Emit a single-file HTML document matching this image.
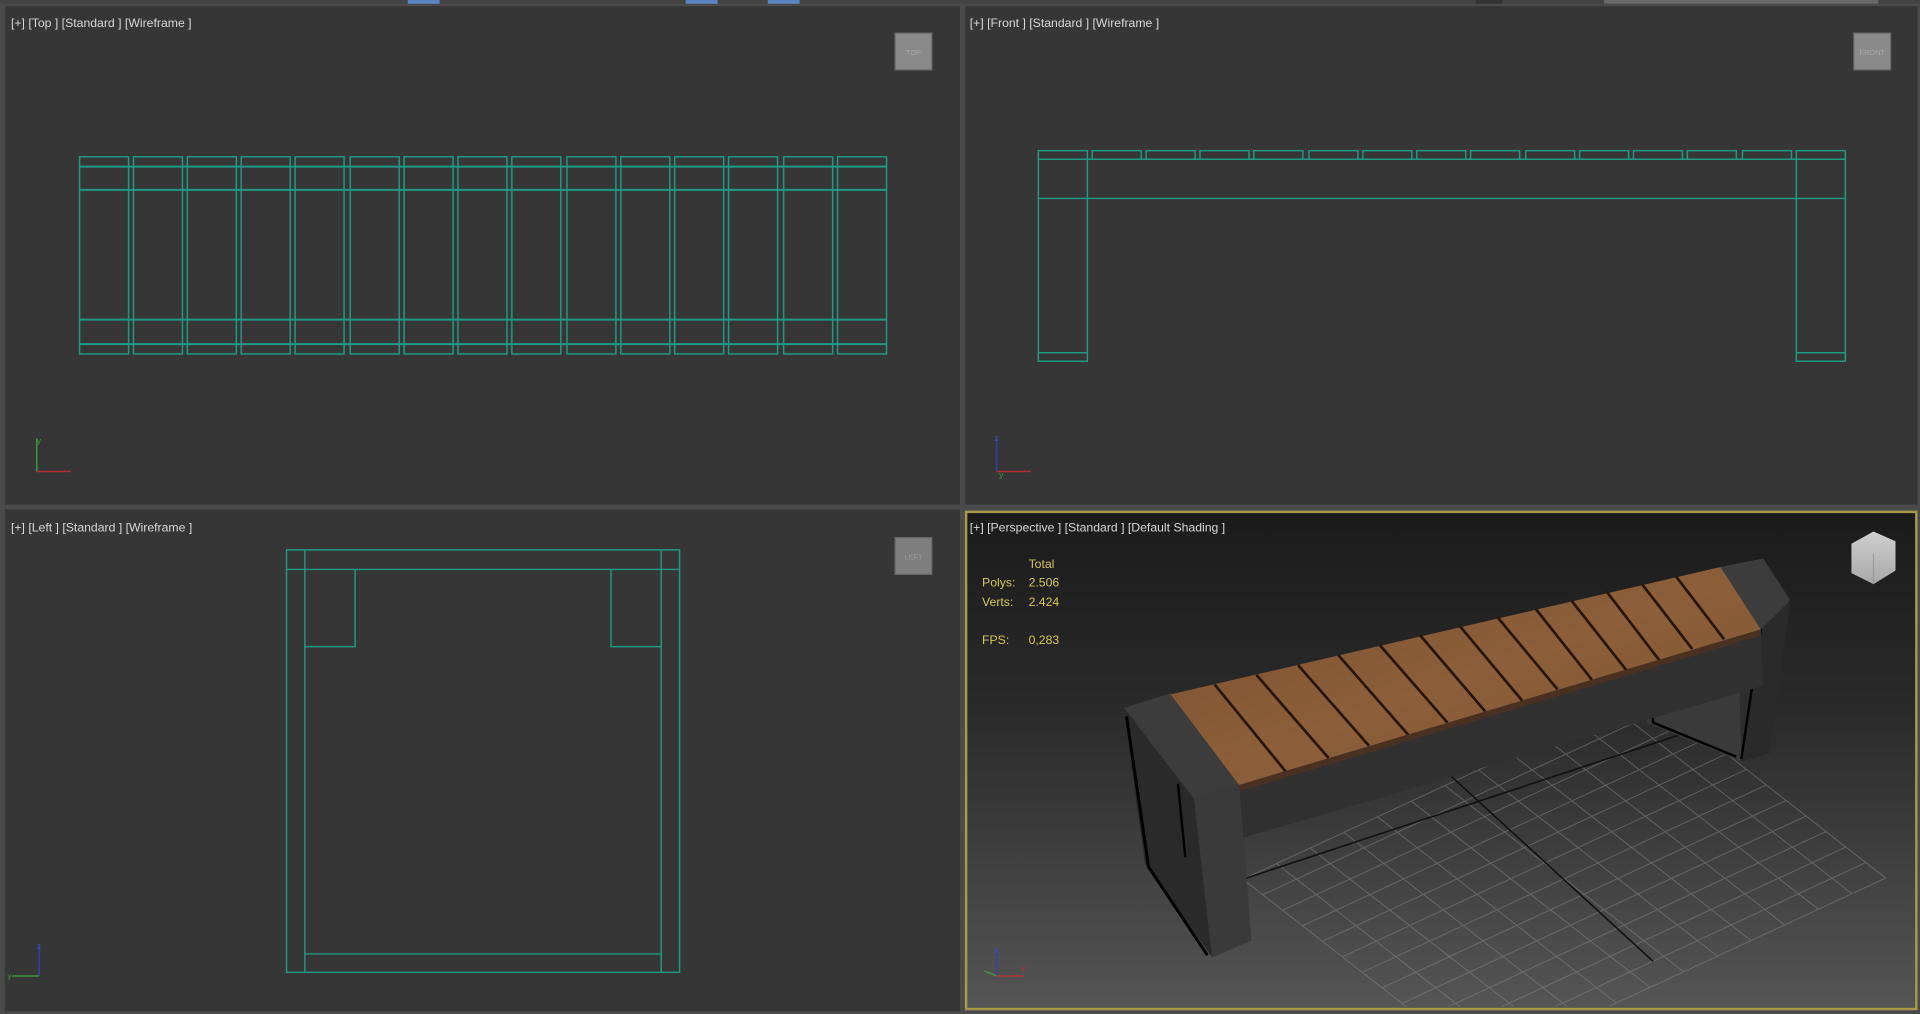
<!DOCTYPE html>
<html><head><meta charset="utf-8"><style>
html,body{margin:0;padding:0;background:#4a4a4a;overflow:hidden;width:1920px;height:1014px}
svg{display:block;position:absolute;left:0;top:0}
text{font-family:"Liberation Sans",sans-serif;font-size:10px;fill:#d8d8d8}
.w{fill:none;stroke:#1e9a86;stroke-width:1.2}
.y{fill:#d6c84a;font-size:10px}
</style></head><body>
<svg width="1920" height="1014" viewBox="0 0 1568 828" xmlns="http://www.w3.org/2000/svg">
<defs>
<linearGradient id="pg" x1="0" y1="0" x2="0" y2="1">
<stop offset="0" stop-color="#1b1b1b"/><stop offset="0.4" stop-color="#2a2a2a"/><stop offset="1" stop-color="#555"/>
</linearGradient>
<linearGradient id="wd" x1="0" y1="0" x2="1" y2="1">
<stop offset="0" stop-color="#7a4e2e"/><stop offset="0.5" stop-color="#8c5f3a"/><stop offset="1" stop-color="#7e5230"/>
</linearGradient>
<linearGradient id="cb" x1="0" y1="0" x2="0" y2="1">
<stop offset="0" stop-color="#d0d0d0"/><stop offset="1" stop-color="#a8a8a8"/>
</linearGradient>
<clipPath id="pc"><rect x="790" y="419" width="774" height="403"/></clipPath>
<g id="tp"><rect class="w" x="0" y="0" width="40" height="161"/></g>
<g id="fp"><rect class="w" x="0" y="0" width="40" height="7"/></g>
</defs>
<rect x="0" y="0" width="1568" height="828" fill="#4a4a4a"/>
<rect x="0" y="0" width="1568" height="3" fill="#444"/>
<rect x="333" y="0" width="26" height="3" fill="#5b87c6"/>
<rect x="560" y="0" width="26" height="3" fill="#5b87c6"/>
<rect x="627" y="0" width="26" height="3" fill="#5b87c6"/>
<rect x="1310" y="0" width="224" height="3" fill="#6a6a6a"/>
<rect x="1205" y="0" width="22" height="3" fill="#333"/>

<rect x="4" y="5" width="780" height="407" fill="#363636"/>
<rect x="788" y="5" width="778" height="407" fill="#363636"/>
<rect x="4" y="416" width="780" height="410" fill="#363636"/>
<rect x="789" y="418" width="776" height="406" fill="url(#pg)" stroke="#a89a48" stroke-width="2"/>

<text x="9" y="22">[+] [Top ] [Standard ] [Wireframe ]</text>
<text x="792" y="22">[+] [Front ] [Standard ] [Wireframe ]</text>
<text x="9" y="434">[+] [Left ] [Standard ] [Wireframe ]</text>
<text x="792" y="434">[+] [Perspective ] [Standard ] [Default Shading ]</text>

<rect x="731" y="27" width="30" height="30" fill="#8a8a8a" stroke="#6c6c6c"/>
<text x="746" y="45" text-anchor="middle" style="font-size:6px;fill:#aaa">TOP</text>
<rect x="1514" y="27" width="30" height="30" fill="#8a8a8a" stroke="#6c6c6c"/>
<text x="1529" y="45" text-anchor="middle" style="font-size:6px;fill:#aaa">FRONT</text>
<rect x="731" y="439" width="30" height="30" fill="#7e7e7e" stroke="#666"/>
<text x="746" y="457" text-anchor="middle" style="font-size:6px;fill:#999">LEFT</text>
<polygon points="1512,444 1530,434 1548,442 1548,466 1530,477 1512,468" fill="url(#cb)"/>
<line x1="1530" y1="452" x2="1530" y2="477" stroke="#999"/>

<use href="#tp" x="65" y="128"/><use href="#tp" x="109" y="128"/><use href="#tp" x="153" y="128"/>
<use href="#tp" x="197" y="128"/><use href="#tp" x="241" y="128"/><use href="#tp" x="286" y="128"/>
<use href="#tp" x="330" y="128"/><use href="#tp" x="374" y="128"/><use href="#tp" x="418" y="128"/>
<use href="#tp" x="463" y="128"/><use href="#tp" x="507" y="128"/><use href="#tp" x="551" y="128"/>
<use href="#tp" x="595" y="128"/><use href="#tp" x="640" y="128"/><use href="#tp" x="684" y="128"/>
<path class="w" d="M65 136H724M65 155H724M65 261H724M65 281H724" style="stroke-width:1.6"/>

<use href="#fp" x="848" y="123"/><use href="#fp" x="892" y="123"/><use href="#fp" x="936" y="123"/>
<use href="#fp" x="980" y="123"/><use href="#fp" x="1024" y="123"/><use href="#fp" x="1069" y="123"/>
<use href="#fp" x="1113" y="123"/><use href="#fp" x="1157" y="123"/><use href="#fp" x="1201" y="123"/>
<use href="#fp" x="1246" y="123"/><use href="#fp" x="1290" y="123"/><use href="#fp" x="1334" y="123"/>
<use href="#fp" x="1378" y="123"/><use href="#fp" x="1423" y="123"/><use href="#fp" x="1467" y="123"/>
<path class="w" d="M848 130H1507M848 162H1507M848 130V295H888V130M1467 130V295H1507V130M848 288H888M1467 288H1507"/>

<path class="w" d="M234 449H555V794H234ZM234 465H555M249 465V794M540 465V794M249 779H540M249 528H290V465M540 528H499V465M249 449V465M540 449V465"/>

<g stroke-width="1.2" fill="none">
<path d="M30 385V358" stroke="#3a9a3a"/><path d="M30 385H58" stroke="#b03030"/>
<path d="M814 385V358" stroke="#3040b0"/><path d="M814 385H842" stroke="#b03030"/>
<path d="M32 797V772" stroke="#3040b0"/><path d="M32 797H10" stroke="#3a9a3a"/>
<path d="M814 797V775" stroke="#3040b0"/><path d="M814 797H836" stroke="#b03030"/><path d="M814 797L804 793" stroke="#3a9a3a"/>
</g>
<text x="30" y="362" style="font-size:7px;fill:#3a9a3a">y</text>
<text x="812" y="360" style="font-size:7px;fill:#4050c0">z</text>
<text x="30" y="775" style="font-size:7px;fill:#4050c0">z</text>
<text x="6" y="799" style="font-size:7px;fill:#3a9a3a">y</text>
<text x="812" y="778" style="font-size:7px;fill:#4050c0">z</text>
<text x="834" y="793" style="font-size:7px;fill:#c03030">x</text>
<text x="816" y="390" style="font-size:7px;fill:#3a9a3a">y</text>

<text class="y" x="840" y="464">Total</text>
<text class="y" x="802" y="479">Polys:</text><text class="y" x="840" y="479">2.506</text>
<text class="y" x="802" y="495">Verts:</text><text class="y" x="840" y="495">2.424</text>
<text class="y" x="802" y="526">FPS:</text><text class="y" x="840" y="526">0,283</text>

<g clip-path="url(#pc)">
<g transform="matrix(27.5 -12.75 16.25 12.67 1015 718)" fill="none" stroke="#8a8a8a" opacity="0.5">
<path vector-effect="non-scaling-stroke" stroke-width="1" d="M0 0V12M1 0V12M2 0V12M3 0V12M4 0V12M5 0V12M6 0V12M7 0V12M8 0V12M9 0V12M10 0V12M11 0V12M12 0V12M0 0H12M0 1H12M0 2H12M0 3H12M0 4H12M0 5H12M0 6H12M0 7H12M0 8H12M0 9H12M0 10H12M0 11H12M0 12H12"/>
</g>
<path d="M1015 718L1378 598M1170 620L1350 785" stroke="#111" stroke-width="1.3"/>
<polygon points="1440,492 1462,492 1445,612 1422,622 1420,520" fill="#2e2e2e"/>
<polygon points="1345,565 1420,532 1422,622 1345,590" fill="#3a3a3a"/>
<path d="M1348 565L1350 590L1418 618" stroke="#000" stroke-width="2" fill="none"/>
<polygon points="1436,515 1462,492 1445,615 1422,622" fill="#2a2a2a"/>
<path d="M1440 500L1422 620" stroke="#000" stroke-width="2"/>
<polygon points="1010,640 1438,514 1440,560 1012,685" fill="#303030"/>
<polygon points="918,580 975,652 990,782 935,705" fill="#2a2a2a"/>
<polygon points="975,652 1012,640 1022,768 990,782" fill="#3a3a3a"/>
<path d="M920 585L938 708L986 780" stroke="#000" stroke-width="2.5" fill="none"/>
<path d="M962 640L968 700" stroke="#000" stroke-width="2"/>
<polygon points="918,578 956,566 1012,640 975,652" fill="#3c3c3c"/>
<polygon points="1405,463 1440,456 1462,490 1438,514" fill="#3c3c3c"/>
<polygon points="956,567 1405,463 1438,514 1012,641" fill="url(#wd)"/>
<g stroke="#24160c" stroke-width="2.2">
<line x1="992" y1="559" x2="1050" y2="630"/>
<line x1="1026" y1="551" x2="1085" y2="619"/>
<line x1="1060" y1="543" x2="1118" y2="609"/>
<line x1="1093" y1="535" x2="1150" y2="600"/>
<line x1="1127" y1="527" x2="1182" y2="590"/>
<line x1="1160" y1="519" x2="1213" y2="581"/>
<line x1="1192" y1="511" x2="1243" y2="572"/>
<line x1="1223" y1="504" x2="1272" y2="563"/>
<line x1="1254" y1="497" x2="1300" y2="555"/>
<line x1="1283" y1="490" x2="1328" y2="547"/>
<line x1="1312" y1="483" x2="1355" y2="539"/>
<line x1="1341" y1="477" x2="1382" y2="530"/>
<line x1="1369" y1="471" x2="1408" y2="522"/>
</g>
<polygon points="1012,641 1438,514 1438,519 1013,646" fill="#4a3020"/>
</g>
</svg>
</body></html>
